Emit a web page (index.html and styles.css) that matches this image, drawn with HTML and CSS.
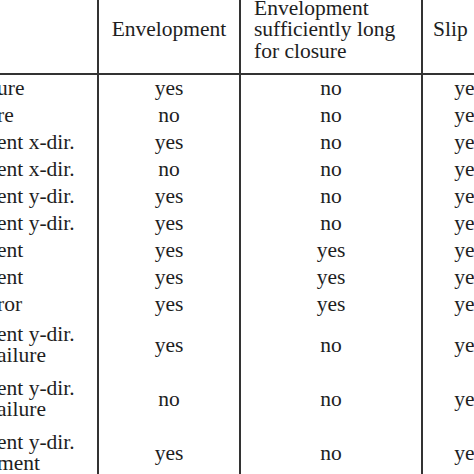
FILE: index.html
```html
<!DOCTYPE html>
<html lang="en">
<head>
<meta charset="utf-8">
<title>Envelopment table</title>
<link rel="stylesheet" href="styles.css">
</head>
<body>
<table class="grid">
  <colgroup>
    <col class="c-label">
    <col class="c-env">
    <col class="c-long">
    <col class="c-slip">
  </colgroup>
  <thead>
    <tr>
      <th class="label"></th>
      <th class="mid">Envelopment</th>
      <th class="left">Envelopment<br>sufficiently long<br>for closure</th>
      <th class="left slip">Slip</th>
    </tr>
  </thead>
  <tbody>
    <tr><td class="label">ure</td><td>yes</td><td>no</td><td>yes</td></tr>
    <tr><td class="label">re</td><td>no</td><td>no</td><td>yes</td></tr>
    <tr><td class="label">ent x-dir.</td><td>yes</td><td>no</td><td>yes</td></tr>
    <tr><td class="label">ent x-dir.</td><td>no</td><td>no</td><td>yes</td></tr>
    <tr><td class="label">ent y-dir.</td><td>yes</td><td>no</td><td>yes</td></tr>
    <tr><td class="label">ent y-dir.</td><td>yes</td><td>no</td><td>yes</td></tr>
    <tr><td class="label">ent</td><td>yes</td><td>yes</td><td>yes</td></tr>
    <tr><td class="label">ent</td><td>yes</td><td>yes</td><td>yes</td></tr>
    <tr><td class="label">ror</td><td>yes</td><td>yes</td><td>yes</td></tr>
    <tr class="tall"><td class="label">ent y-dir.<br>ailure</td><td>yes</td><td>no</td><td>yes</td></tr>
    <tr class="tall"><td class="label">ent y-dir.<br>ailure</td><td>no</td><td>no</td><td>yes</td></tr>
    <tr class="tall"><td class="label">ent y-dir.<br>ment</td><td>yes</td><td>no</td><td>yes</td></tr>
  </tbody>
</table>
</body>
</html>
```
FILE: styles.css
```css
html, body {
  margin: 0;
  padding: 0;
  background: #ffffff;
  overflow: hidden;
}

.grid {
  margin: -13px 0 0 -3px;
  border-collapse: collapse;
  table-layout: fixed;
  width: 517px;
  font-family: "Liberation Serif", "Tinos", "DejaVu Serif", serif;
  font-size: 21.5px;
  line-height: 21.4px;
  color: #1e1e1e;
}

.c-label { width: 101px; }
.c-env { width: 142px; }
.c-long { width: 182px; }
.c-slip { width: 92px; }

.grid th,
.grid td {
  padding: 2.8px 0;
  text-align: center;
  vertical-align: middle;
  font-weight: normal;
  border-left: 2px solid #333333;
  white-space: nowrap;
  overflow: hidden;
}

.grid th:first-child,
.grid td:first-child {
  border-left: none;
}

.grid thead th {
  padding: 11px 0;
  border-bottom: 2px solid #333333;
}

.grid .tall td {
  padding: 5.6px 0;
}

.grid .label {
  text-align: left;
}

.grid .left {
  text-align: left;
  padding-left: 13px;
}

.grid .slip {
  padding-left: 10px;
}
```
